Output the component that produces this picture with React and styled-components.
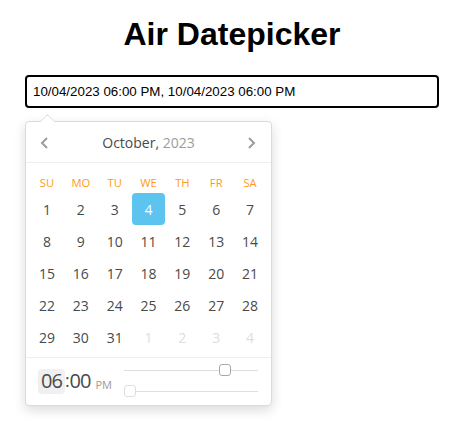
import React from "react"
import styled, { createGlobalStyle } from "styled-components"

const GlobalStyle = createGlobalStyle`
  body {
    margin: 0;
    background: #fff;
    font-family: "Liberation Sans", Arial, sans-serif;
  }
`

const dayNames = ["Su", "Mo", "Tu", "We", "Th", "Fr", "Sa"]

const buildCells = () => {
  const cells = []
  for (let d = 1; d <= 31; d++) cells.push({ day: d, other: false })
  for (let d = 1; d <= 4; d++) cells.push({ day: d, other: true })
  return cells
}

const ChevronLeft = () => (
  <svg width="32" height="32" viewBox="0 0 32 32">
    <path d="M 17,12 l -5,5 l 5,5" fill="none" stroke="#9c9c9c" strokeWidth="2" />
  </svg>
)

const ChevronRight = () => (
  <svg width="32" height="32" viewBox="0 0 32 32">
    <path d="M 14,12 l 5,5 l -5,5" fill="none" stroke="#9c9c9c" strokeWidth="2" />
  </svg>
)

const Range = ({ value, min, max, active }) => {
  const pct = (value - min) / (max - min)
  return (
    <RangeRow>
      <Track />
      <Thumb $active={active} style={{ left: `calc((100% - 12px) * ${pct})` }} />
    </RangeRow>
  )
}

const App = () => {
  const cells = buildCells()
  return (
    <Page>
      <GlobalStyle />
      <Title>Air Datepicker</Title>
      <DateInput readOnly value="10/04/2023 06:00 PM, 10/04/2023 06:00 PM" />
      <Picker>
        <Pointer />
        <Nav>
          <NavAction>
            <ChevronLeft />
          </NavAction>
          <NavTitle>
            October, <i>2023</i>
          </NavTitle>
          <NavAction>
            <ChevronRight />
          </NavAction>
        </Nav>
        <Body>
          <DayNames>
            {dayNames.map((n) => (
              <DayName key={n}>{n}</DayName>
            ))}
          </DayNames>
          <Cells>
            {cells.map((c, i) => (
              <Cell key={i} $other={c.other} $selected={!c.other && c.day === 4}>
                {c.day}
              </Cell>
            ))}
          </Cells>
        </Body>
        <Time>
          <Current>
            <Hours>06</Hours>
            <Colon>:</Colon>
            <Minutes>00</Minutes>
            <AmPm>pm</AmPm>
          </Current>
          <Sliders>
            <Range value={18} min={0} max={23} active />
            <Range value={0} min={0} max={59} />
          </Sliders>
        </Time>
      </Picker>
    </Page>
  )
}

export default App

const Page = styled.div`
  padding: 16px 23px 20px 25px;
`

const Title = styled.h1`
  margin: 0 0 22px;
  text-align: center;
  font-size: 32px;
  font-weight: bold;
  line-height: 37px;
  color: #000;
`

const DateInput = styled.input`
  display: block;
  box-sizing: border-box;
  width: 414px;
  height: 33px;
  margin: 0;
  padding: 0 6px;
  border: 2px solid #000;
  border-radius: 4px;
  font-family: "Liberation Sans", Arial, sans-serif;
  font-size: 13.333px;
  color: #000;
  outline: none;
`

const Picker = styled.div`
  position: relative;
  box-sizing: border-box;
  width: 247px;
  margin-top: 13px;
  background: #fff;
  border: 1px solid #dbdbdb;
  border-radius: 4px;
  box-shadow: 0 4px 12px rgba(0, 0, 0, 0.15);
  font-family: "Open Sans", "Noto Sans", sans-serif;
  font-size: 14px;
  color: #4a4a4a;
`

const Pointer = styled.div`
  position: absolute;
  top: -6px;
  left: 16px;
  width: 10px;
  height: 10px;
  background: #fff;
  border-top: 1px solid #dbdbdb;
  border-left: 1px solid #dbdbdb;
  border-top-left-radius: 2px;
  transform: rotate(45deg);
`

const Nav = styled.div`
  display: flex;
  justify-content: space-between;
  align-items: center;
  padding: 4px;
  border-bottom: 1px solid #efefef;
`

const NavAction = styled.div`
  display: flex;
  width: 32px;
  height: 32px;
  align-items: center;
  justify-content: center;
  border-radius: 4px;
  cursor: pointer;
`

const NavTitle = styled.div`
  padding: 0 8px;
  color: #4a4a4a;

  i {
    font-style: normal;
    color: #9c9c9c;
  }
`

const Body = styled.div`
  padding: 4px;
`

const DayNames = styled.div`
  display: grid;
  grid-template-columns: repeat(7, 1fr);
  margin: 8px 0 3px;
`

const DayName = styled.div`
  height: 15px;
  line-height: 15px;
  text-align: center;
  text-transform: uppercase;
  font-size: 11.2px;
  color: #ff9a19;
`

const Cells = styled.div`
  display: grid;
  grid-template-columns: repeat(7, 1fr);
  grid-auto-rows: 32px;
`

const Cell = styled.div`
  display: flex;
  align-items: center;
  justify-content: center;
  border-radius: 4px;
  color: ${(p) => (p.$selected ? "#fff" : p.$other ? "#dedede" : "#4a4a4a")};
  background: ${(p) => (p.$selected ? "#5cc4ef" : "transparent")};
`

const Time = styled.div`
  display: grid;
  grid-template-columns: max-content 1fr;
  align-items: center;
  padding: 2px 13px 3px 12px;
  border-top: 1px solid #efefef;
`

const Current = styled.div`
  display: flex;
  align-items: center;
  margin-right: 12px;
  line-height: 1;
`

const Hours = styled.span`
  padding: 2px 3px 3px;
  border-radius: 4px;
  background: #f0f0f0;
  font-size: 20px;
  letter-spacing: -1px;
`

const Minutes = styled.span`
  padding: 2px 0 3px;
  font-size: 20px;
  letter-spacing: -1px;
`

const Colon = styled.span`
  margin: 0 0 2px;
  font-size: 18px;
`

const AmPm = styled.span`
  align-self: flex-end;
  margin: 0 0 4px 5px;
  text-transform: uppercase;
  font-size: 11px;
  color: #9c9c9c;
`

const Sliders = styled.div`
  display: flex;
  flex-direction: column;
`

const RangeRow = styled.div`
  position: relative;
  height: 21px;
`

const Track = styled.div`
  position: absolute;
  top: 10px;
  left: 0;
  right: 0;
  height: 1px;
  background: #dedede;
`

const Thumb = styled.div`
  position: absolute;
  top: 4px;
  box-sizing: border-box;
  width: 12px;
  height: 12px;
  background: #fff;
  border: 1px solid ${(p) => (p.$active ? "#a8a8a8" : "#dedede")};
  border-radius: 3px;
`
